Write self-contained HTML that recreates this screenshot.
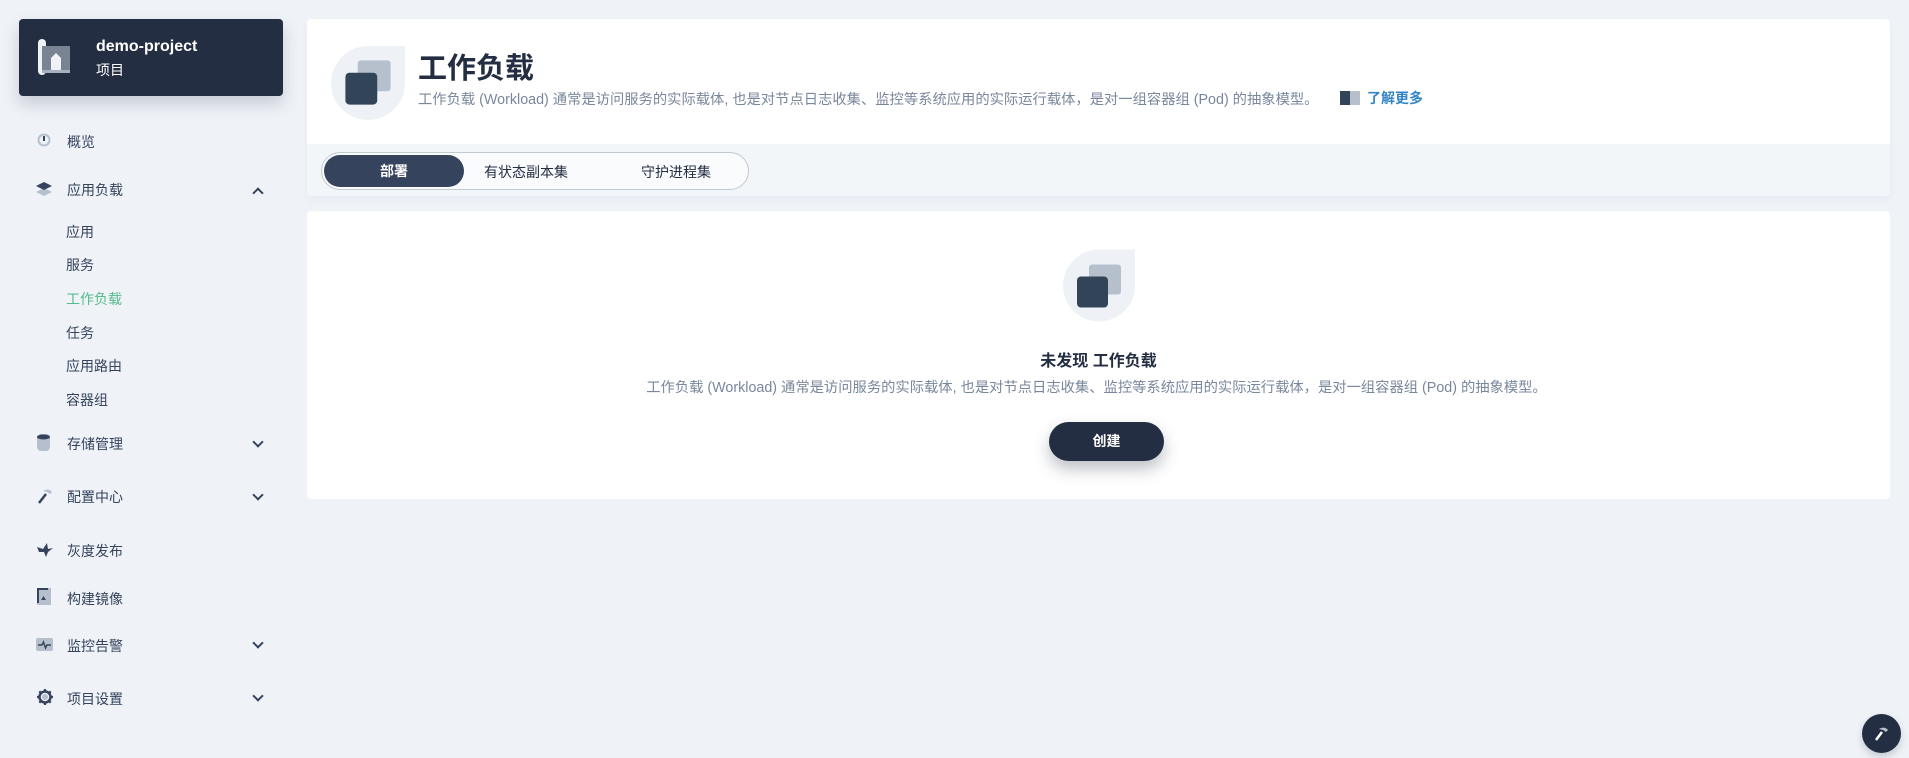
<!DOCTYPE html>
<html><head><meta charset="utf-8"><style>
*{box-sizing:border-box;margin:0;padding:0}
body{width:1909px;height:758px;overflow:hidden;background:#eff3f8;font-family:"Liberation Sans","Noto Sans CJK SC",sans-serif;color:#242e42;position:relative}
.abs{position:absolute}
.card{left:19px;top:19px;width:264px;height:77px;background:#242e42;border-radius:4px;box-shadow:0 8px 16px rgba(36,46,66,.2)}
.nav{font-size:14px;color:#36435c;white-space:nowrap}
.chev{width:8px;height:8px;border-right:2px solid #36435c;border-bottom:2px solid #36435c;transform:rotate(45deg)}
.chev.up{transform:rotate(-135deg)}
.panel{background:#fff;border-radius:4px}
</style></head><body>
<div class="abs card">
 <svg class="abs" style="left:19px;top:20px" width="38" height="36" viewBox="0 0 38 36"><rect x="0" y="0" width="8" height="36" rx="4" fill="#eef2f6"/><rect x="4" y="7" width="28" height="27" fill="#7a8394"/><rect x="4" y="31" width="28" height="3" fill="#a7b0bd"/><path d="M13 31V19l5-5 5 5v12z" fill="#eef2f6"/></svg>
 <div class="abs" style="left:77px;top:19px;color:#fff;font-weight:bold;font-size:16px">demo-project</div>
 <div class="abs" style="left:77px;top:41px;color:#fff;font-size:14px">项目</div>
</div>

<svg class="abs" style="left:37px;top:133px" width="14" height="14"><circle cx="7" cy="7" r="6.5" fill="#b6c0cd"/><circle cx="7" cy="7" r="4.5" fill="#eef2f6"/><path d="M7 3v5" stroke="#36435c" stroke-width="2"/></svg>
<svg class="abs" style="left:36px;top:182px" width="16" height="15"><path d="M8 6l8 4-8 4-8-4z" fill="#b6c0cd"/><path d="M8 0l8 4-8 4-8-4z" fill="#36435c"/></svg>
<svg class="abs" style="left:37px;top:434px" width="13" height="17"><rect x="0" y="0" width="13" height="17" rx="4" fill="#b6c0cd"/><ellipse cx="6.5" cy="3" rx="6.5" ry="2.5" fill="#36435c"/></svg>
<svg class="abs" style="left:37px;top:488px" width="16" height="16"><path d="M2 15l7-9" stroke="#36435c" stroke-width="2.5"/><path d="M6 3c3-2 7-2 9 1l-2 2-3-2z" fill="#b6c0cd"/></svg>
<svg class="abs" style="left:37px;top:543px" width="16" height="14"><path d="M0 4l6 2 4-6 1 6 5-1-5 4-2 5-2-5-5 0z" fill="#36435c"/></svg>
<svg class="abs" style="left:37px;top:588px" width="14" height="17"><rect x="0" y="0" width="14" height="17" fill="#b6c0cd"/><rect x="0" y="0" width="11" height="15" fill="#36435c"/><rect x="2" y="2" width="9" height="13" fill="#b6c0cd"/><path d="M4 12l2.5-4 2.5 4z" fill="#36435c"/></svg>
<svg class="abs" style="left:36px;top:638px" width="17" height="13"><rect width="17" height="13" rx="2" fill="#b6c0cd"/><path d="M2 7h4l1.5-3 2 6 1.5-3h4" stroke="#36435c" stroke-width="1.4" fill="none"/></svg>
<svg class="abs" style="left:37px;top:689px" width="16" height="16" viewBox="0 0 16 16"><circle cx="8" cy="8" r="5.5" fill="none" stroke="#36435c" stroke-width="2.5"/><path d="M8 0v3M8 13v3M0 8h3M13 8h3M2.3 2.3l2 2M11.7 11.7l2 2M2.3 13.7l2-2M11.7 4.3l2-2" stroke="#36435c" stroke-width="2.2"/><circle cx="8" cy="8" r="3" fill="#b6c0cd"/></svg>

<div class="abs nav" style="left:67px;top:132px">概览</div>
<div class="abs nav" style="left:67px;top:180px">应用负载</div>
<div class="abs chev up" style="left:254px;top:189px"></div>
<div class="abs nav" style="left:66px;top:222px">应用</div>
<div class="abs nav" style="left:66px;top:255px">服务</div>
<div class="abs nav" style="left:66px;top:289px;color:#55bc8a">工作负载</div>
<div class="abs nav" style="left:66px;top:323px">任务</div>
<div class="abs nav" style="left:66px;top:356px">应用路由</div>
<div class="abs nav" style="left:66px;top:390px">容器组</div>
<div class="abs nav" style="left:67px;top:434px">存储管理</div>
<div class="abs chev" style="left:254px;top:438px"></div>
<div class="abs nav" style="left:67px;top:487px">配置中心</div>
<div class="abs chev" style="left:254px;top:491px"></div>
<div class="abs nav" style="left:67px;top:541px">灰度发布</div>
<div class="abs nav" style="left:67px;top:589px">构建镜像</div>
<div class="abs nav" style="left:67px;top:636px">监控告警</div>
<div class="abs chev" style="left:254px;top:639px"></div>
<div class="abs nav" style="left:67px;top:689px">项目设置</div>
<div class="abs chev" style="left:254px;top:692px"></div>

<div class="abs panel" style="left:307px;top:19px;width:1583px;height:177px;background:#f3f6f9;overflow:hidden;box-shadow:0 4px 8px rgba(36,46,66,.04)">
 <div class="abs" style="left:0;top:0;width:1583px;height:125px;background:#fff"></div>
 <svg class="abs" style="left:24px;top:27px" width="74" height="74" viewBox="0 0 72 72"><path d="M36 0H72V36A36 36 0 1 1 36 0z" fill="#eef2f6"/><rect x="26" y="14" width="32" height="30" rx="3" fill="#b6c0cd"/><rect x="14" y="26" width="31" height="31" rx="4" fill="#324558"/></svg>
 <div class="abs" style="left:111px;top:26px;font-size:29px;font-weight:bold;color:#242e42">工作负载</div>
 <div class="abs" style="left:111px;top:69px;font-size:14.3px;color:#79879c;white-space:nowrap">工作负载 (Workload) 通常是访问服务的实际载体, 也是对节点日志收集、监控等系统应用的实际运行载体，是对一组容器组 (Pod) 的抽象模型。</div>
 <svg class="abs" style="left:1033px;top:72px" width="20" height="14"><rect width="10" height="14" fill="#324558"/><rect x="10" width="10" height="14" fill="#b6c0cd"/></svg>
 <div class="abs" style="left:1060px;top:69px;font-size:14px;font-weight:bold;color:#3385c6">了解更多</div>
 <div class="abs" style="left:14px;top:133px;width:428px;height:38px;border:1px solid #c1c9d1;border-radius:20px;background:#f9fbfd"></div>
 <div class="abs" style="left:17px;top:136px;width:140px;height:32px;border-radius:16px;background:#36435c;color:#fff;font-size:14px;font-weight:bold;text-align:center;line-height:32px">部署</div>
 <div class="abs" style="left:177px;top:143px;font-size:14px;color:#242e42">有状态副本集</div>
 <div class="abs" style="left:334px;top:143px;font-size:14px;color:#242e42">守护进程集</div>
</div>

<div class="abs panel" style="left:307px;top:211px;width:1583px;height:288px">
 <svg class="abs" style="left:756px;top:38px" width="72" height="73" viewBox="0 0 72 72"><path d="M36 0H72V36A36 36 0 1 1 36 0z" fill="#eef2f6"/><rect x="26" y="15" width="32" height="30" rx="3" fill="#b6c0cd"/><rect x="14" y="27" width="31" height="31" rx="4" fill="#324558"/></svg>
 <div class="abs" style="left:0;width:1583px;top:136px;text-align:center;font-size:16px;font-weight:bold;color:#242e42">未发现 工作负载</div>
 <div class="abs" style="left:-2px;width:1583px;top:165px;text-align:center;font-size:14.3px;color:#79879c;white-space:nowrap">工作负载 (Workload) 通常是访问服务的实际载体, 也是对节点日志收集、监控等系统应用的实际运行载体，是对一组容器组 (Pod) 的抽象模型。</div>
 <div class="abs" style="left:742px;top:211px;width:115px;height:39px;border-radius:20px;background:#242e42;color:#fff;font-size:14px;font-weight:bold;text-align:center;line-height:39px;box-shadow:0 8px 16px rgba(36,46,66,.3)">创建</div>
</div>

<div class="abs" style="left:1862px;top:714px;width:39px;height:39px;border-radius:50%;background:#242e42;box-shadow:0 4px 8px rgba(36,46,66,.2)">
 <svg class="abs" style="left:11px;top:11px" width="17" height="17"><path d="M3 15l6-8" stroke="#fff" stroke-width="2.5"/><path d="M6 4c3-2 7-2 9 1l-2 2-3-2z" fill="#b6c0cd"/></svg>
</div>
</body></html>
